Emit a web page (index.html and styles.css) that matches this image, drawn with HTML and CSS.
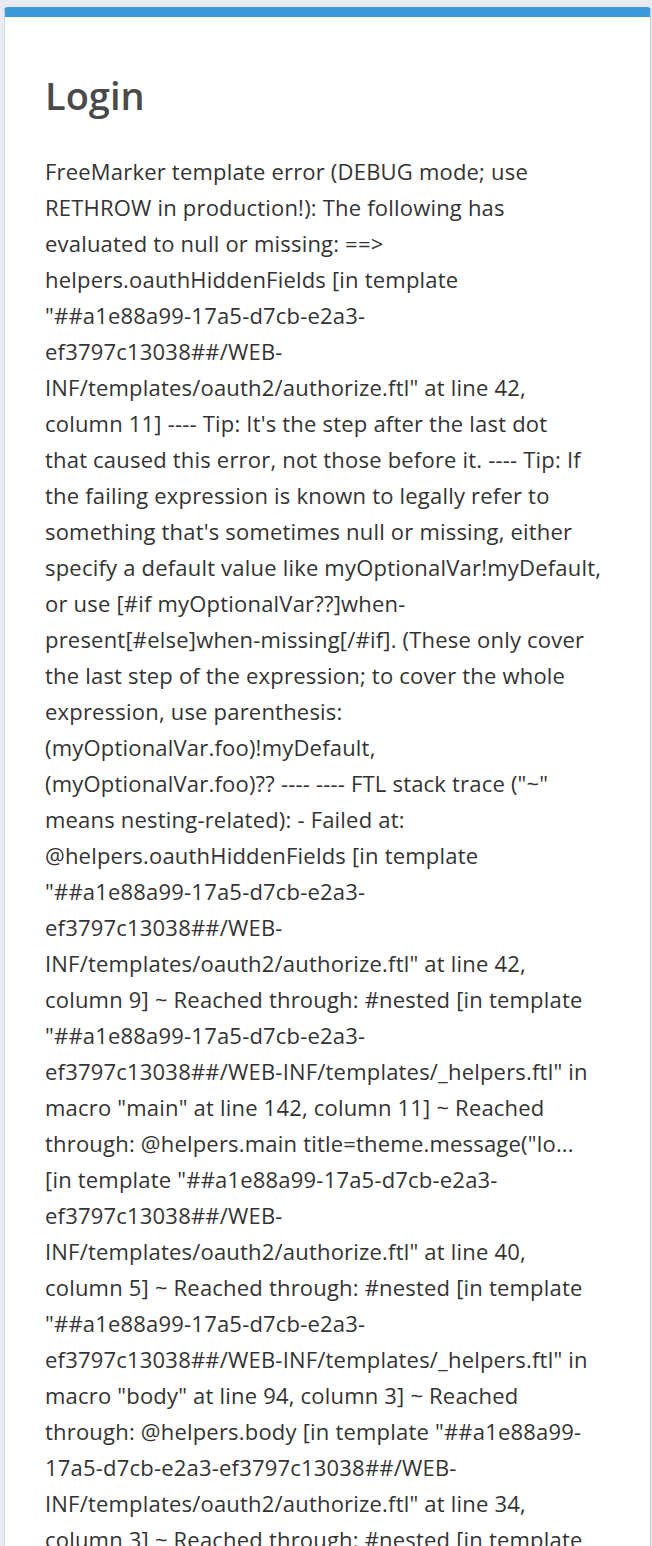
FILE: index.html
```html
<!DOCTYPE html>
<html lang="en">
<head>
<meta charset="utf-8">
<title>Login</title>
<link rel="stylesheet" href="styles.css">
</head>
<body>
<div class="card">
  <h1 class="title">Login</h1>
  <p class="error">
    <span class="ln">FreeMarker template error (DEBUG mode; use</span>
    <span class="ln">RETHROW in production!): The following has</span>
    <span class="ln">evaluated to null or missing: ==&gt;</span>
    <span class="ln">helpers.oauthHiddenFields [in template</span>
    <span class="ln">"##a1e88a99-17a5-d7cb-e2a3-</span>
    <span class="ln">ef3797c13038##/WEB-</span>
    <span class="ln">INF/templates/oauth2/authorize.ftl" at line 42,</span>
    <span class="ln">column 11] ---- Tip: It's the step after the last dot</span>
    <span class="ln">that caused this error, not those before it. ---- Tip: If</span>
    <span class="ln">the failing expression is known to legally refer to</span>
    <span class="ln">something that's sometimes null or missing, either</span>
    <span class="ln">specify a default value like myOptionalVar!myDefault,</span>
    <span class="ln">or use [#if myOptionalVar??]when-</span>
    <span class="ln">present[#else]when-missing[/#if]. (These only cover</span>
    <span class="ln">the last step of the expression; to cover the whole</span>
    <span class="ln">expression, use parenthesis:</span>
    <span class="ln">(myOptionalVar.foo)!myDefault,</span>
    <span class="ln">(myOptionalVar.foo)?? ---- ---- FTL stack trace ("~"</span>
    <span class="ln">means nesting-related): - Failed at:</span>
    <span class="ln">@helpers.oauthHiddenFields [in template</span>
    <span class="ln">"##a1e88a99-17a5-d7cb-e2a3-</span>
    <span class="ln">ef3797c13038##/WEB-</span>
    <span class="ln">INF/templates/oauth2/authorize.ftl" at line 42,</span>
    <span class="ln">column 9] ~ Reached through: #nested [in template</span>
    <span class="ln">"##a1e88a99-17a5-d7cb-e2a3-</span>
    <span class="ln">ef3797c13038##/WEB-INF/templates/_helpers.ftl" in</span>
    <span class="ln">macro "main" at line 142, column 11] ~ Reached</span>
    <span class="ln">through: @helpers.main title=theme.message("lo...</span>
    <span class="ln">[in template "##a1e88a99-17a5-d7cb-e2a3-</span>
    <span class="ln">ef3797c13038##/WEB-</span>
    <span class="ln">INF/templates/oauth2/authorize.ftl" at line 40,</span>
    <span class="ln">column 5] ~ Reached through: #nested [in template</span>
    <span class="ln">"##a1e88a99-17a5-d7cb-e2a3-</span>
    <span class="ln">ef3797c13038##/WEB-INF/templates/_helpers.ftl" in</span>
    <span class="ln">macro "body" at line 94, column 3] ~ Reached</span>
    <span class="ln">through: @helpers.body [in template "##a1e88a99-</span>
    <span class="ln">17a5-d7cb-e2a3-ef3797c13038##/WEB-</span>
    <span class="ln">INF/templates/oauth2/authorize.ftl" at line 34,</span>
    <span class="ln">column 3] ~ Reached through: #nested [in template</span>
  </p>
</div>
</body>
</html>
```
FILE: styles.css
```css
html, body {
  margin: 0;
  padding: 0;
}
body {
  background: #e8ecf2;
  font-family: "Open Sans", "Noto Sans", "Liberation Sans", sans-serif;
  height: 1546px;
  overflow: hidden;
}
.card {
  margin: 7px 1px 0 4px;
  background: #ffffff;
  border-top: 10px solid #3a9ad9;
  border-left: 1px solid #d4d8de;
  border-right: 1px solid #c6cad0;
  border-radius: 4px 4px 0 0;
  padding: 52px 38px 0 40px;
  min-height: 1600px;
}
.title {
  margin: 0 0 32px;
  font-size: 38px;
  line-height: 52px;
  font-weight: 600;
  color: #4a4a4a;
}
.error {
  margin: 0;
  font-size: 22px;
  letter-spacing: 0.2px;
  line-height: 36px;
  color: #333333;
}
.ln {
  display: block;
  white-space: nowrap;
}
```
